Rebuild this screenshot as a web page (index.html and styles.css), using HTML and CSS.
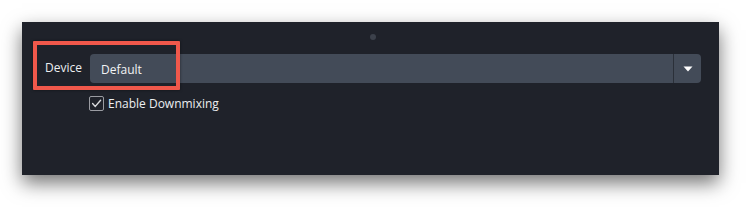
FILE: index.html
```html
<!DOCTYPE html>
<html>
<head>
<meta charset="utf-8">
<link rel="stylesheet" href="styles.css">
</head>
<body>
<div class="stage">
  <div class="panel">
    <div class="handle"></div>
    <div class="row">
      <span class="label">Device</span>
      <div class="select">
        <span class="value">Default</span>
        <span class="arrow"><svg width="10" height="6" viewBox="0 0 10 6"><path d="M0.5 0.5 H9.5 L5 5.5 Z" fill="#ffffff"/></svg></span>
      </div>
      <div class="highlight"></div>
    </div>
    <label class="check">
      <span class="box"><svg width="13" height="13" viewBox="0 0 13 13"><path d="M2.6 6.6 L5.3 9.4 L10.6 3.2" fill="none" stroke="#d8d9dc" stroke-width="1.4" stroke-linecap="round" stroke-linejoin="round"/></svg></span>
      <span class="check-text">Enable Downmixing</span>
    </label>
  </div>
</div>
</body>
</html>
```

FILE: styles.css
```css
html, body {
  margin: 0;
  padding: 0;
  background: #ffffff;
}
body {
  width: 751px;
  height: 207px;
  overflow: hidden;
  font-family: "Open Sans", "Noto Sans", sans-serif;
}
.stage {
  padding: 22px 32px 0 22px;
}
.panel {
  position: relative;
  width: 697px;
  height: 153px;
  background: #1f222a;
  box-shadow: 0 8px 18px rgba(0, 0, 0, 0.55);
  box-sizing: border-box;
  padding: 32px 18px 0 23px;
}
.handle {
  position: absolute;
  left: 348px;
  top: 12px;
  width: 6px;
  height: 6px;
  border-radius: 50%;
  background: #3c414b;
}
.row {
  position: relative;
  display: flex;
  align-items: center;
  height: 29px;
}
.label {
  color: #eceef0;
  font-size: 12px;
  width: 45px;
  margin-top: -3px;
}
.select {
  flex: 1;
  display: flex;
  align-items: center;
  height: 29px;
  background: #434b58;
  border-radius: 4px;
}
.value {
  flex: 1;
  color: #f2f3f4;
  font-size: 12px;
  padding-left: 11px;
  margin-top: 1px;
}
.arrow {
  width: 27px;
  height: 29px;
  border-left: 1px solid #2b3039;
  display: flex;
  align-items: center;
  justify-content: center;
}
.arrow svg {
  display: block;
  margin-left: 1px;
}
.highlight {
  position: absolute;
  left: -12px;
  top: -13px;
  width: 147px;
  height: 49px;
  box-sizing: border-box;
  border: 4px solid #f0584b;
  border-radius: 1px;
  box-shadow: 0 0 3px rgba(0,0,0,0.5);
}
.check {
  display: flex;
  align-items: center;
  margin-top: 12px;
  margin-left: 44px;
}
.box {
  width: 13px;
  height: 13px;
  border: 1px solid #9a9ca2;
  border-radius: 2px;
  display: flex;
  align-items: center;
  justify-content: center;
  margin-right: 4px;
}
.box svg {
  display: block;
}
.check-text {
  color: #eceef0;
  font-size: 12px;
}
```
